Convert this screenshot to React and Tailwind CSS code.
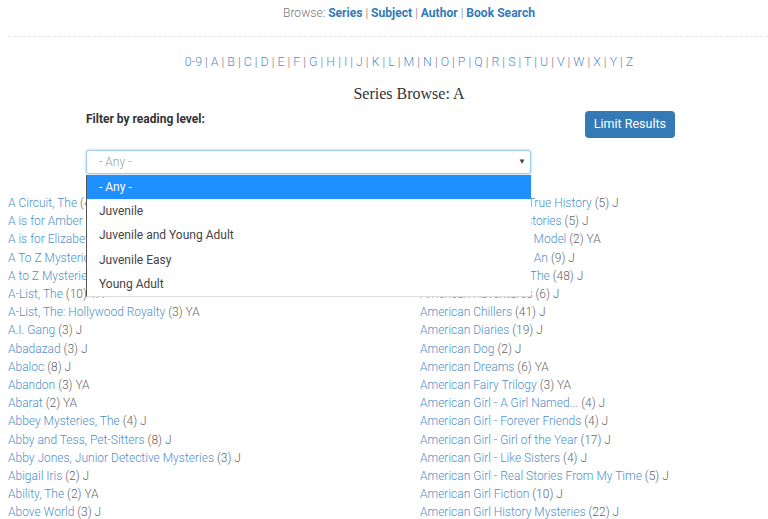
import React from "react";

const letters = ["0-9", "A", "B", "C", "D", "E", "F", "G", "H", "I", "J", "K", "L", "M", "N", "O", "P", "Q", "R", "S", "T", "U", "V", "W", "X", "Y", "Z"];

const leftSeries = [
  ["A Circuit, The", "(4) J"],
  ["A is for Amber", "(10) J"],
  ["A is for Elizabeth", "(4) J"],
  ["A To Z Mysteries", "(26) J"],
  ["A to Z Mysteries Super Edition", "(11) J"],
  ["A-List, The", "(10) YA"],
  ["A-List, The: Hollywood Royalty", "(3) YA"],
  ["A.I. Gang", "(3) J"],
  ["Abadazad", "(3) J"],
  ["Abaloc", "(8) J"],
  ["Abandon", "(3) YA"],
  ["Abarat", "(2) YA"],
  ["Abbey Mysteries, The", "(4) J"],
  ["Abby and Tess, Pet-Sitters", "(8) J"],
  ["Abby Jones, Junior Detective Mysteries", "(3) J"],
  ["Abigail Iris", "(2) J"],
  ["Ability, The", "(2) YA"],
  ["Above World", "(3) J"],
];

const rightSeries = [
  ["All About Beavers: A True History", "(5) J"],
  ["Amazing Animals Histories", "(5) J"],
  ["Amanda Adams Role Model", "(2) YA"],
  ["Amazing Adventures, An", "(9) J"],
  ["Amazing Chronicles, The", "(48) J"],
  ["American Adventures", "(6) J"],
  ["American Chillers", "(41) J"],
  ["American Diaries", "(19) J"],
  ["American Dog", "(2) J"],
  ["American Dreams", "(6) YA"],
  ["American Fairy Trilogy", "(3) YA"],
  ["American Girl - A Girl Named...", "(4) J"],
  ["American Girl - Forever Friends", "(4) J"],
  ["American Girl - Girl of the Year", "(17) J"],
  ["American Girl - Like Sisters", "(4) J"],
  ["American Girl - Real Stories From My Time", "(5) J"],
  ["American Girl Fiction", "(10) J"],
  ["American Girl History Mysteries", "(22) J"],
];

const options = ["- Any -", "Juvenile", "Juvenile and Young Adult", "Juvenile Easy", "Young Adult"];

const SeriesColumn = ({ items }) => (
  <ul className="flex-1">
    {items.map((item, index) => (
      <li key={index} className="leading-[18.2px] whitespace-nowrap">
        <a href="#" className="text-[#4f8fca]">{item[0]}</a>{" "}
        <span className="text-[#666]">{item[1]}</span>
      </li>
    ))}
  </ul>
);

const App = () => {
  return (
    <div className="w-[768px] h-[519px] overflow-hidden bg-white font-['Roboto',sans-serif] font-light text-[12px] text-[#666]">
      <div className="pl-[50px] pt-[4px] text-center text-[12.1px] leading-[18px]">
        <span className="text-[#777]">Browse: </span>
        <a href="#" className="font-bold text-[#337ab7]">Series</a>
        <span className="text-[#777]"> | </span>
        <a href="#" className="font-bold text-[#337ab7]">Subject</a>
        <span className="text-[#777]"> | </span>
        <a href="#" className="font-bold text-[#337ab7]">Author</a>
        <span className="text-[#777]"> | </span>
        <a href="#" className="font-bold text-[#337ab7]">Book Search</a>
      </div>
      <div className="ml-[8px] mt-[14px] border-t border-dashed border-[#e6e6e6]" />

      <div className="pl-[50px] mt-[17px] text-center text-[12.4px] leading-[16px]">
        {letters.map((l, i) => (
          <span key={l}>
            {i > 0 && <span className="text-[#777]"> | </span>}
            <a href="#" className="text-[#4f8fca]">{l}</a>
          </span>
        ))}
      </div>

      <h2 className="pl-[50px] mt-[15px] text-center font-['Liberation_Serif',serif] font-normal text-[16px] leading-[18px] text-[#333]">
        Series Browse: A
      </h2>

      <div className="relative flex ml-[86px] mt-[-2px] w-[589px]">
        <div className="flex-1">
          <div className="pt-[10px] font-bold text-[12px] leading-[16px] text-[#333]">Filter by reading level:</div>
          <div className="relative mt-[23px] w-[445px]">
            <div className="flex items-center justify-between h-[24px] px-[12px] border border-[#9ecaed] rounded-[3px] shadow-[0_0_3px_#9ecaed] text-[12px] text-[#999] bg-white">
              <span>- Any -</span>
              <span className="text-[8px] text-[#444] mr-[-8px]">▼</span>
            </div>
            <div className="absolute left-0 top-[25px] w-[445px] z-10 bg-white border-l border-[#555] border-b border-b-[#ddd] font-normal text-[12px] text-[#444]">
              {options.map((o, i) => (
                <div
                  key={o}
                  className={
                    i === 0
                      ? "h-[24px] leading-[24px] px-[12px] bg-[#1e90ff] text-white"
                      : "h-[24.3px] leading-[24px] px-[12px]"
                  }
                >
                  {o}
                </div>
              ))}
            </div>
          </div>
        </div>
        <div className="pt-[10px]">
          <button className="h-[27px] px-[9px] rounded-[4px] bg-[#337ab7] text-white font-normal text-[12.5px]">
            Limit Results
          </button>
        </div>
      </div>

      <div className="flex mt-[20px] pl-[8px]">
        <SeriesColumn items={leftSeries} />
        <div className="w-[348px]">
          <SeriesColumn items={rightSeries} />
        </div>
      </div>
    </div>
  );
};

export default App;
